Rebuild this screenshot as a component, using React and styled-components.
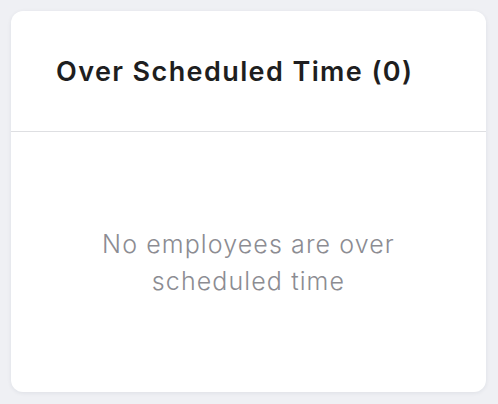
import React from "react";
import styled, { createGlobalStyle } from "styled-components";

const Global = createGlobalStyle`
  html, body { margin: 0; padding: 0; background: #eff0f4; }
  body { font-family: "Inter", "Open Sans", sans-serif; }
`;

const Page = styled.div`
  padding: 11px 12px 12px 11px;
`;

const Card = styled.section`
  background: #ffffff;
  border-radius: 12px;
  height: 381px;
  box-shadow: 0 1px 4px rgba(30, 35, 60, 0.08);
  display: flex;
  flex-direction: column;
  overflow: hidden;
`;

const Header = styled.header`
  height: 121px;
  box-sizing: border-box;
  padding: 0 40px 0 45px;
  display: flex;
  align-items: center;
  border-bottom: 1px solid #dedfe2;
`;

const Title = styled.h2`
  margin: 0;
  font-size: 27px;
  font-weight: 600;
  color: #1e1e20;
  letter-spacing: 1.4px;
  white-space: nowrap;
`;

const Body = styled.div`
  flex: 1;
  display: flex;
  align-items: center;
  justify-content: center;
  padding-top: 2px;
`;

const Empty = styled.p`
  margin: 0;
  width: 330px;
  text-align: center;
  font-size: 25px;
  line-height: 37px;
  font-weight: 300;
  letter-spacing: 1.1px;
  color: #8c8c92;
`;

export default function App() {
  return (
    <Page>
      <Global />
      <Card>
        <Header>
          <Title>Over Scheduled Time (0)</Title>
        </Header>
        <Body>
          <Empty>No employees are over scheduled time</Empty>
        </Body>
      </Card>
    </Page>
  );
}
